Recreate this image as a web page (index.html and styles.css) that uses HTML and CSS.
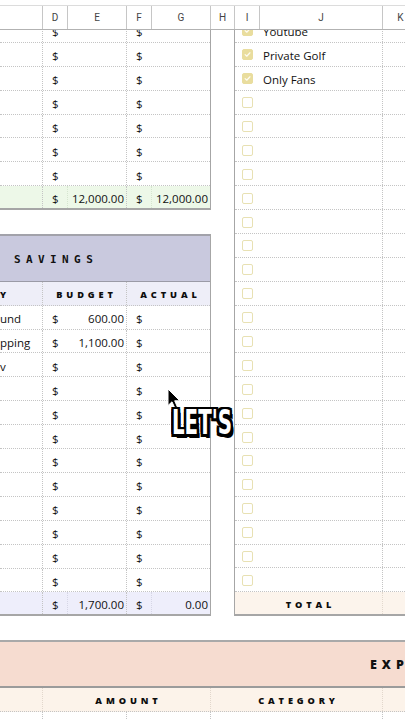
FILE: index.html
```html
<!DOCTYPE html>
<html lang="en">
<head>
<meta charset="utf-8">
<title>Budget sheet</title>
<link rel="stylesheet" href="styles.css">
</head>
<body>
<div class="sheet">
  <div class="colheads">
    <div class="ch ch-c"></div>
    <div class="ch ch-d">D</div>
    <div class="ch ch-e">E</div>
    <div class="ch ch-f">F</div>
    <div class="ch ch-g">G</div>
    <div class="ch ch-h">H</div>
    <div class="ch ch-i">I</div>
    <div class="ch ch-j">J</div>
    <div class="ch ch-k">K</div>
  </div>

  <div class="viewport">
    <div class="content">
      <div class="upper">
        <div class="leftcol">
          <div class="t1">
            <div class="lrow"><div class="cell vd"></div><div class="cell cur">$</div><div class="cell amt vd"></div><div class="cell cur">$</div><div class="cell amt"></div></div>
            <div class="lrow"><div class="cell vd"></div><div class="cell cur">$</div><div class="cell amt vd"></div><div class="cell cur">$</div><div class="cell amt"></div></div>
            <div class="lrow"><div class="cell vd"></div><div class="cell cur">$</div><div class="cell amt vd"></div><div class="cell cur">$</div><div class="cell amt"></div></div>
            <div class="lrow"><div class="cell vd"></div><div class="cell cur">$</div><div class="cell amt vd"></div><div class="cell cur">$</div><div class="cell amt"></div></div>
            <div class="lrow"><div class="cell vd"></div><div class="cell cur">$</div><div class="cell amt vd"></div><div class="cell cur">$</div><div class="cell amt"></div></div>
            <div class="lrow"><div class="cell vd"></div><div class="cell cur">$</div><div class="cell amt vd"></div><div class="cell cur">$</div><div class="cell amt"></div></div>
            <div class="lrow"><div class="cell vd"></div><div class="cell cur">$</div><div class="cell amt vd"></div><div class="cell cur">$</div><div class="cell amt"></div></div>
            <div class="lrow lrow-green"><div class="cell vd"></div><div class="cell cur vf-g">$</div><div class="cell amt vd">12,000.00</div><div class="cell cur vf-g">$</div><div class="cell amt">12,000.00</div></div>
          </div>

          <div class="gaprow"></div>

          <div class="savings">
            <div class="sv-bar">SAVINGS</div>
            <div class="sv-head"><div class="cell vd lbl-left">Y</div><div class="cell lbl vd">BUDGET</div><div class="cell lbl">ACTUAL</div></div>
            <div class="lrow"><div class="cell name vd">und</div><div class="cell cur">$</div><div class="cell amt vd">600.00</div><div class="cell cur">$</div><div class="cell amt"></div></div>
            <div class="lrow"><div class="cell name vd">pping</div><div class="cell cur">$</div><div class="cell amt vd">1,100.00</div><div class="cell cur">$</div><div class="cell amt"></div></div>
            <div class="lrow"><div class="cell name vd">v</div><div class="cell cur">$</div><div class="cell amt vd"></div><div class="cell cur">$</div><div class="cell amt"></div></div>
            <div class="lrow"><div class="cell vd"></div><div class="cell cur">$</div><div class="cell amt vd"></div><div class="cell cur">$</div><div class="cell amt"></div></div>
            <div class="lrow"><div class="cell vd"></div><div class="cell cur">$</div><div class="cell amt vd"></div><div class="cell cur">$</div><div class="cell amt"></div></div>
            <div class="lrow"><div class="cell vd"></div><div class="cell cur">$</div><div class="cell amt vd"></div><div class="cell cur">$</div><div class="cell amt"></div></div>
            <div class="lrow"><div class="cell vd"></div><div class="cell cur">$</div><div class="cell amt vd"></div><div class="cell cur">$</div><div class="cell amt"></div></div>
            <div class="lrow"><div class="cell vd"></div><div class="cell cur">$</div><div class="cell amt vd"></div><div class="cell cur">$</div><div class="cell amt"></div></div>
            <div class="lrow"><div class="cell vd"></div><div class="cell cur">$</div><div class="cell amt vd"></div><div class="cell cur">$</div><div class="cell amt"></div></div>
            <div class="lrow"><div class="cell vd"></div><div class="cell cur">$</div><div class="cell amt vd"></div><div class="cell cur">$</div><div class="cell amt"></div></div>
            <div class="lrow"><div class="cell vd"></div><div class="cell cur">$</div><div class="cell amt vd"></div><div class="cell cur">$</div><div class="cell amt"></div></div>
            <div class="lrow"><div class="cell vd"></div><div class="cell cur">$</div><div class="cell amt vd"></div><div class="cell cur">$</div><div class="cell amt"></div></div>
            <div class="lrow lrow-sv-total"><div class="cell vd"></div><div class="cell cur vf-s">$</div><div class="cell amt vd">1,700.00</div><div class="cell cur vf-s">$</div><div class="cell amt">0.00</div></div>
          </div>
        </div>

        <div class="hcol"></div>

        <div class="checklist">
          <div class="crow"><div class="ci"><span class="cb on"><svg class="tick" viewBox="0 0 11 11"><polyline points="2.6,5.6 4.6,7.6 8.5,3.4"/></svg></span></div><div class="cj">Youtube</div><div class="ck"></div></div>
          <div class="crow"><div class="ci"><span class="cb on"><svg class="tick" viewBox="0 0 11 11"><polyline points="2.6,5.6 4.6,7.6 8.5,3.4"/></svg></span></div><div class="cj">Private Golf</div><div class="ck"></div></div>
          <div class="crow"><div class="ci"><span class="cb on"><svg class="tick" viewBox="0 0 11 11"><polyline points="2.6,5.6 4.6,7.6 8.5,3.4"/></svg></span></div><div class="cj">Only Fans</div><div class="ck"></div></div>
          <div class="crow"><div class="ci"><span class="cb"></span></div><div class="cj"></div><div class="ck"></div></div>
          <div class="crow"><div class="ci"><span class="cb"></span></div><div class="cj"></div><div class="ck"></div></div>
          <div class="crow"><div class="ci"><span class="cb"></span></div><div class="cj"></div><div class="ck"></div></div>
          <div class="crow"><div class="ci"><span class="cb"></span></div><div class="cj"></div><div class="ck"></div></div>
          <div class="crow"><div class="ci"><span class="cb"></span></div><div class="cj"></div><div class="ck"></div></div>
          <div class="crow"><div class="ci"><span class="cb"></span></div><div class="cj"></div><div class="ck"></div></div>
          <div class="crow"><div class="ci"><span class="cb"></span></div><div class="cj"></div><div class="ck"></div></div>
          <div class="crow"><div class="ci"><span class="cb"></span></div><div class="cj"></div><div class="ck"></div></div>
          <div class="crow"><div class="ci"><span class="cb"></span></div><div class="cj"></div><div class="ck"></div></div>
          <div class="crow"><div class="ci"><span class="cb"></span></div><div class="cj"></div><div class="ck"></div></div>
          <div class="crow"><div class="ci"><span class="cb"></span></div><div class="cj"></div><div class="ck"></div></div>
          <div class="crow"><div class="ci"><span class="cb"></span></div><div class="cj"></div><div class="ck"></div></div>
          <div class="crow"><div class="ci"><span class="cb"></span></div><div class="cj"></div><div class="ck"></div></div>
          <div class="crow"><div class="ci"><span class="cb"></span></div><div class="cj"></div><div class="ck"></div></div>
          <div class="crow"><div class="ci"><span class="cb"></span></div><div class="cj"></div><div class="ck"></div></div>
          <div class="crow"><div class="ci"><span class="cb"></span></div><div class="cj"></div><div class="ck"></div></div>
          <div class="crow"><div class="ci"><span class="cb"></span></div><div class="cj"></div><div class="ck"></div></div>
          <div class="crow"><div class="ci"><span class="cb"></span></div><div class="cj"></div><div class="ck"></div></div>
          <div class="crow"><div class="ci"><span class="cb"></span></div><div class="cj"></div><div class="ck"></div></div>
          <div class="crow"><div class="ci"><span class="cb"></span></div><div class="cj"></div><div class="ck"></div></div>
          <div class="crow"><div class="ci"><span class="cb"></span></div><div class="cj"></div><div class="ck"></div></div>
          <div class="ctotal"><div class="cell lbl vt">TOTAL</div><div class="cell"></div></div>
        </div>
      </div>

      <div class="gaprow"></div>

      <section class="expenses">
        <div class="exp-bar">EXPENSES</div>
        <div class="exp-head"><div class="cell vx"></div><div class="cell lbl vx">AMOUNT</div><div class="cell lbl vx">CATEGORY</div><div class="cell"></div></div>
        <div class="exp-row"><div class="cell vd"></div><div class="cell cur">$</div><div class="cell amt vd"></div><div class="cell cur">$</div><div class="cell amt vd"></div><div class="cell vd"></div><div class="cell"></div></div>
      </section>
    </div>
  </div>

  <svg class="pointer" viewBox="0 0 14 22" aria-hidden="true"><path d="M1 1 L1 17.5 L5 13.8 L8 20.5 L10.6 19.4 L7.7 12.8 L12.8 12.8 Z"/></svg>
  <div class="caption">LET'S</div>
</div>
</body>
</html>
```

FILE: styles.css
```css
:root {
  --rh: 23.9px;
  --dot: 1px dotted #c4c4c4;
  --edge: #a6a6a6;
}

* { box-sizing: border-box; }

html, body {
  margin: 0;
  padding: 0;
}

body {
  background: #ffffff;
  font-family: "Open Sans", "Liberation Sans", sans-serif;
  font-size: 11.5px;
  color: #111;
  overflow: hidden;
}

.sheet {
  position: relative;
  width: 405px;
  height: 720px;
  overflow: hidden;
}

/* column letters */
.colheads {
  display: flex;
  margin-top: 5px;
  height: 25px;
  border-top: 1px solid #dcdcdc;
  border-bottom: 1px solid #b2b2b2;
  font-family: Roboto, "Liberation Sans", sans-serif;
  font-size: 10px;
  color: #444;
  overflow: hidden;
  white-space: nowrap;
}
.ch {
  flex: none;
  display: flex;
  align-items: center;
  justify-content: center;
  border-right: 1px solid #c6c6c6;
}
.ch-c { width: 43px; }
.ch-d { width: 25px; }
.ch-e { width: 59px; }
.ch-f { width: 25px; }
.ch-g { width: 59px; }
.ch-h { width: 24px; }
.ch-i { width: 25px; }
.ch-j { width: 123px; }
.ch-k { width: 36px; }

.viewport {
  height: 690px;
  overflow: hidden;
}
.content { margin-top: -11px; }

.upper {
  display: flex;
  align-items: flex-start;
}
.leftcol { width: 211px; flex: none; }
.hcol { width: 23px; flex: none; }
.checklist {
  flex: 1;
  min-width: 0;
  border-left: 1px solid var(--edge);
}

.gaprow { height: var(--rh); }

/* generic cells (sheet text sits a little low, as in bottom-aligned cells) */
.cell {
  display: flex;
  align-items: center;
  min-width: 0;
  padding-top: 3px;
  overflow: hidden;
  white-space: nowrap;
}
.vd { border-right: var(--dot); }
.cur { padding-left: 9px; }
.amt { justify-content: flex-end; padding-right: 2px; }
.name { padding-left: 0; }

/* left tables */
.t1, .savings { border-right: 1px solid var(--edge); }

.lrow {
  display: grid;
  grid-template-columns: 43px 25px 59px 25px 58px;
  height: var(--rh);
  border-bottom: var(--dot);
}
.lrow-green {
  background: #edf8e8;
  border-bottom: 2px solid var(--edge);
}
.vf-g { border-right: 1px dotted #d5e5cf; }

.sv-bar {
  height: calc(var(--rh) * 2);
  background: #c9c9de;
  border-top: 2px solid #a2a2aa;
  border-bottom: 1px solid #9a9aa6;
  display: flex;
  align-items: center;
  padding-left: 14px;
  padding-top: 2px;
  font-family: "DejaVu Sans Mono", monospace;
  font-weight: 700;
  font-size: 11px;
  letter-spacing: 5.4px;
  color: #111;
}
.sv-head {
  display: grid;
  grid-template-columns: 43px 84px 83px;
  height: var(--rh);
  background: #eeeef8;
  border-bottom: var(--dot);
}
.lbl {
  justify-content: center;
  padding-left: 4px;
  font-weight: 800;
  font-size: 9.2px;
  letter-spacing: 3.9px;
  color: #0d0d0d;
}
.lbl-left {
  font-weight: 800;
  font-size: 9.2px;
  color: #0d0d0d;
}
.lrow-sv-total {
  background: #eeeefb;
  border-bottom: 2px solid var(--edge);
}
.vf-s { border-right: 1px dotted #d6d6e6; }

/* checklist */
.crow {
  display: grid;
  grid-template-columns: 25px 123px 1fr;
  height: var(--rh);
  border-bottom: var(--dot);
}
.ci {
  display: flex;
  align-items: center;
  justify-content: center;
  padding-top: 1px;
}
.cj {
  display: flex;
  align-items: center;
  padding-left: 3px;
  padding-top: 3px;
  border-right: var(--dot);
  white-space: nowrap;
  overflow: hidden;
}
.cb {
  display: block;
  width: 11px;
  height: 11px;
  border: 1px solid #e8e1b3;
  border-radius: 2px;
  background: #fff;
}
.cb.on {
  background: #e9dd9e;
  border-color: #e9dd9e;
}
.tick {
  display: block;
  width: 9px;
  height: 9px;
  fill: none;
  stroke: #fdfbf0;
  stroke-width: 1.5;
  stroke-linecap: round;
  stroke-linejoin: round;
}
.ctotal {
  display: grid;
  grid-template-columns: 148px 1fr;
  height: var(--rh);
  background: #fcf4ec;
  border-bottom: 2px solid var(--edge);
}
.vt { border-right: 1px dotted #e3d9ce; }

/* expenses */
.exp-bar {
  height: calc(var(--rh) * 2);
  background: #f6dcd0;
  border-top: 2px solid #a9a9a9;
  border-bottom: 2px solid #9b9b9b;
  display: flex;
  align-items: center;
  padding-left: 370px;
  font-weight: 800;
  font-size: 12.5px;
  letter-spacing: 5px;
  color: #111;
  white-space: nowrap;
  overflow: hidden;
}
.exp-head {
  display: grid;
  grid-template-columns: 43px 168px 172px 1fr;
  height: var(--rh);
  background: #fcf3ea;
  border-bottom: var(--dot);
}
.vx { border-right: 1px dotted #e2d7cc; }
.exp-row {
  display: grid;
  grid-template-columns: 43px 25px 59px 25px 59px 172px 1fr;
  height: var(--rh);
  border-bottom: var(--dot);
}

/* overlays: mouse pointer and video caption */
.pointer {
  position: absolute;
  left: 167px;
  top: 388px;
  width: 14px;
  height: 22px;
  fill: #000;
  stroke: #fff;
  stroke-width: 1;
  stroke-linejoin: round;
}
.caption {
  position: absolute;
  left: 172px;
  top: 406px;
  font-family: "DejaVu Sans", sans-serif;
  font-weight: 700;
  font-size: 33px;
  line-height: 1;
  color: #fff;
  transform: scaleX(0.6);
  transform-origin: 0 0;
  white-space: nowrap;
  text-shadow:
    4px 0 0 #000, -4px 0 0 #000, 0 2.5px 0 #000, 0 -2.5px 0 #000,
    4px 2.5px 0 #000, -4px -2.5px 0 #000, 4px -2.5px 0 #000, -4px 2.5px 0 #000,
    2px 2.5px 0 #000, -2px -2.5px 0 #000, 2px -2.5px 0 #000, -2px 2.5px 0 #000,
    5px 3.5px 0 #000;
}
```
